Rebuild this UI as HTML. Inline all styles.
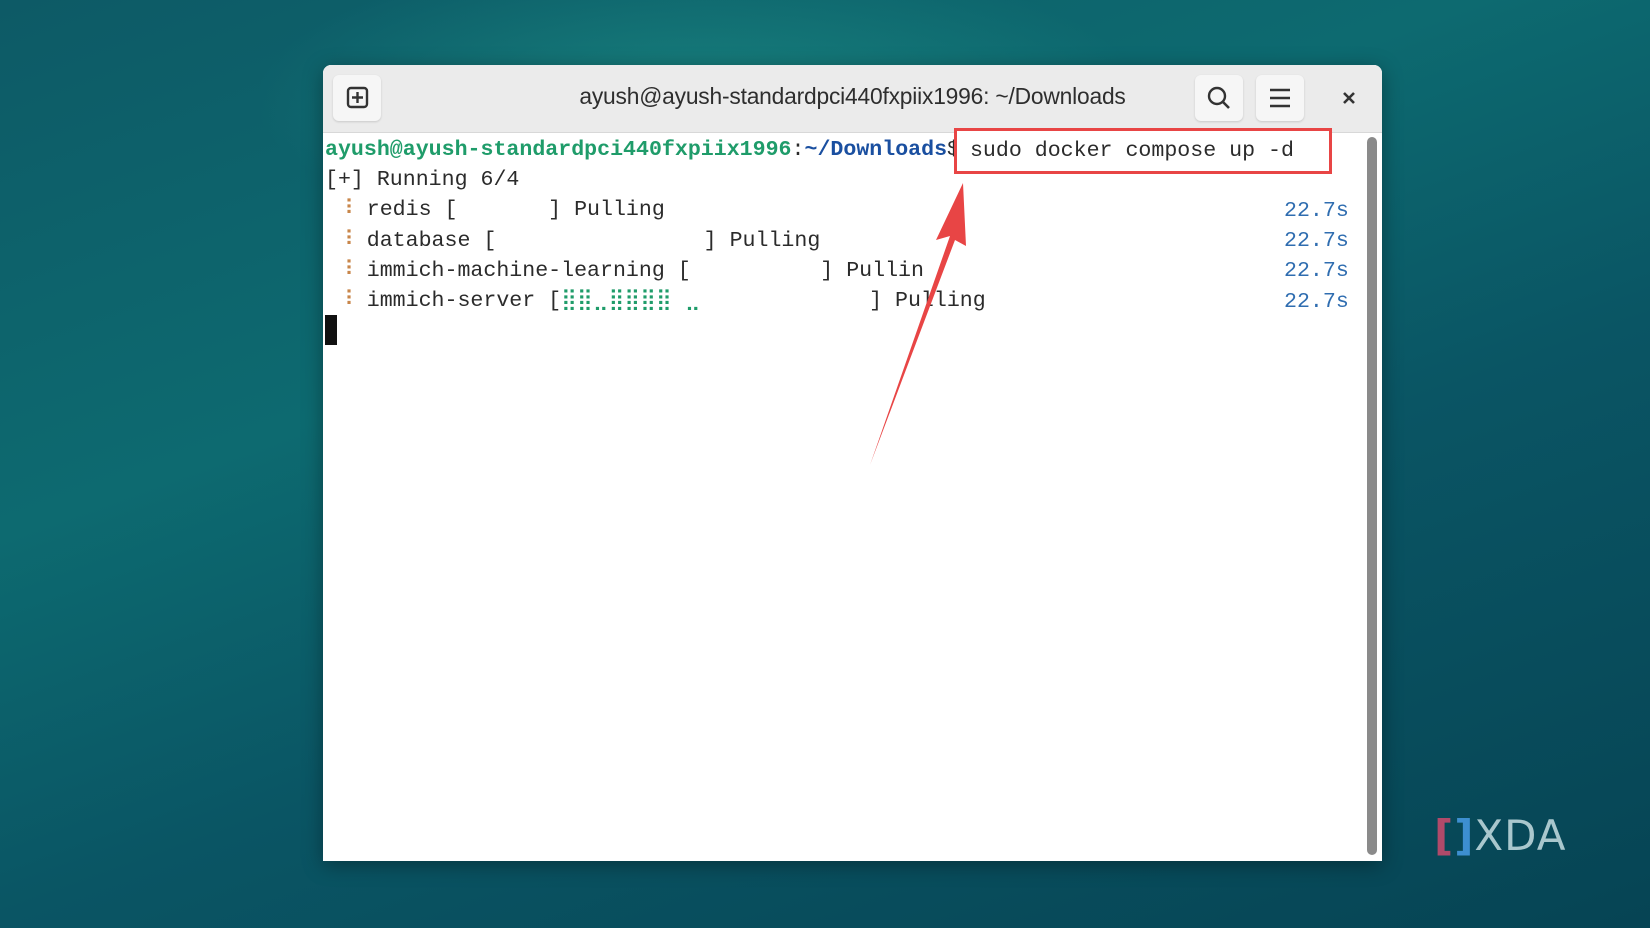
<!DOCTYPE html>
<html><head><meta charset="utf-8"><style>
html,body{margin:0;padding:0;width:1650px;height:928px;overflow:hidden;}
body{background:linear-gradient(160deg,#0d5a66 0%,#0d6a70 35%,#0a5564 60%,#064454 100%);position:relative;font-family:"Liberation Sans",sans-serif;}
.glow{position:absolute;left:250px;top:-50px;width:900px;height:300px;background:radial-gradient(ellipse at center,rgba(40,170,150,.4),rgba(0,0,0,0) 70%);}
.win{position:absolute;left:323px;top:65px;width:1059px;height:796px;background:#fff;border-radius:8px 8px 0 0;overflow:hidden;box-shadow:0 4px 20px rgba(0,0,0,.35);}
.tb{position:absolute;left:0;top:0;right:0;height:67px;background:#ebebeb;border-bottom:1px solid #d8d8d8;}
.btn{position:absolute;top:10px;width:48px;height:46px;background:#f6f6f6;border-radius:6px;box-shadow:0 1px 2px rgba(0,0,0,.15);}
.title{position:absolute;left:0;right:0;top:18px;text-align:center;font-size:22.8px;color:#2e2e2e;letter-spacing:-0.2px;}
.term{position:absolute;left:2px;top:70px;font-family:"Liberation Mono","DejaVu Sans Mono",monospace;font-size:21.6px;line-height:30.2px;color:#2b2b2b;white-space:pre;}
.g{color:#1f9c6a;font-weight:bold}.b{color:#1a4fa0;font-weight:bold}.o{color:#c8864a}
.times{position:absolute;left:961px;top:131px;font-family:"Liberation Mono",monospace;font-size:21.6px;line-height:30.2px;color:#2f6db0;white-space:pre;}
.sb{position:absolute;left:1044px;top:72px;width:10px;height:718px;background:#8a8a8a;border-radius:5px;}
.cur{position:absolute;left:2px;top:250px;width:12px;height:30px;background:#111;}
</style></head><body>
<div class="glow"></div>
<div class="win">
 <div class="tb">
  <div class="btn" style="left:10px"><svg width="48" height="46"><rect x="15" y="13" width="19" height="19" rx="3" fill="none" stroke="#333" stroke-width="2.4"/><path d="M24.5 17v11M19 22.5h11" stroke="#333" stroke-width="2.4"/></svg></div>
  <div class="title">ayush@ayush-standardpci440fxpiix1996: ~/Downloads</div>
  <div class="btn" style="left:872px"><svg width="48" height="46"><circle cx="22" cy="21" r="8" fill="none" stroke="#333" stroke-width="2.4"/><path d="M28 27l6 6" stroke="#333" stroke-width="2.6"/></svg></div>
  <div class="btn" style="left:933px"><svg width="48" height="46"><path d="M14 15h20M14 23h20M14 31h20" stroke="#333" stroke-width="2.6"/></svg></div>
  <svg style="position:absolute;left:1017px;top:24px" width="18" height="18"><path d="M4 4l10 10M14 4L4 14" stroke="#333" stroke-width="2.6"/></svg>
 </div>
 <div class="term"><span class="g">ayush@ayush-standardpci440fxpiix1996</span>:<span class="b">~/Downloads</span>$ sudo docker compose up -d
[+] Running 6/4
 <span class="o">⠸</span> redis [       ] Pulling
 <span class="o">⠸</span> database [                ] Pulling
 <span class="o">⠸</span> immich-machine-learning [          ] Pullin
 <span class="o">⠸</span> immich-server [<span class="g" style="font-weight:normal">⣿⣿⣀⣿⣿⣿⣿ ⣀</span>             ] Pulling</div>
 <div class="times">22.7s
22.7s
22.7s
22.7s</div>
 <div class="cur"></div>
 <div class="sb"></div>
</div>
<div style="position:absolute;left:954px;top:128px;width:372px;height:40px;border:3px solid #e84545;background:#fff;font-family:'Liberation Mono',monospace;font-size:21.6px;line-height:40px;color:#2b2b2b;white-space:pre;box-sizing:content-box"> sudo docker compose up -d</div>
<svg style="position:absolute;left:0;top:0" width="1650" height="928"><path d="M963 183 L936 240 L950 236 L870 465 L955 240 L966 246 Z" fill="#e84545"/></svg>
<div style="position:absolute;left:1434px;top:816px;font-size:42px;line-height:40px;color:#a9c7cd;font-family:'DejaVu Sans',sans-serif;letter-spacing:1px"><span style="color:#b04a6a;font-weight:bold">[</span><span style="color:#3d8fd0;font-weight:bold">]</span>XDA</div>
</body></html>
